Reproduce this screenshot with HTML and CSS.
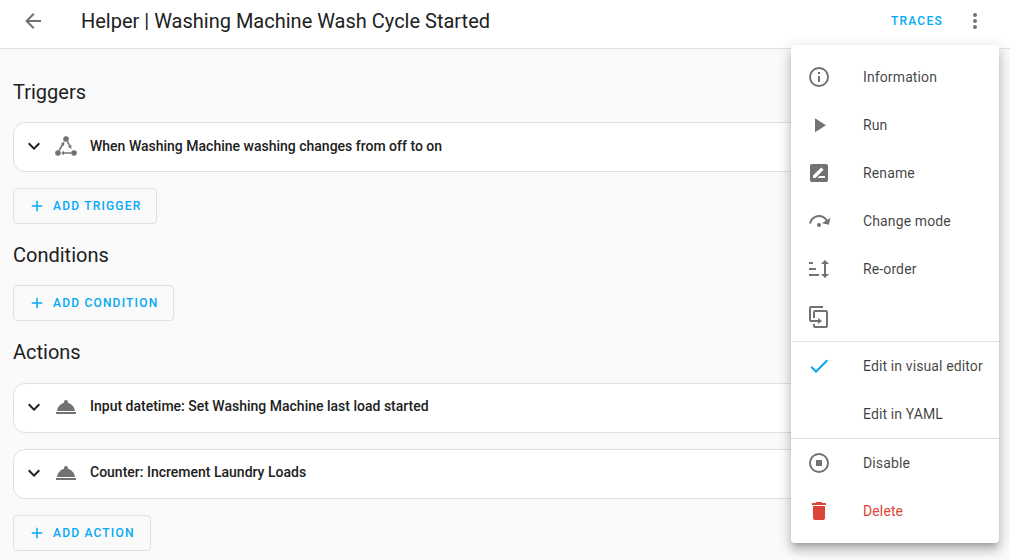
FILE: index.html
```html
<!DOCTYPE html>
<html lang="en">
<head>
  <meta charset="UTF-8" />
  <title>Helper | Washing Machine Wash Cycle Started</title>
  <link rel="stylesheet" href="styles.css">
</head>
<body>

  <header class="toolbar">
    <svg class="icon back-icon" viewBox="0 0 24 24"><path d="M20,11V13H8L13.5,18.5L12.08,19.92L4.16,12L12.08,4.08L13.5,5.5L8,11H20Z"/></svg>
    <div class="toolbar-title">Helper | Washing Machine Wash Cycle Started</div>
    <a class="traces" href="#">Traces</a>
    <svg class="icon dots-icon" viewBox="0 0 24 24"><path d="M12,16A2,2 0 0,1 14,18A2,2 0 0,1 12,20A2,2 0 0,1 10,18A2,2 0 0,1 12,16M12,10A2,2 0 0,1 14,12A2,2 0 0,1 12,14A2,2 0 0,1 10,12A2,2 0 0,1 12,10M12,4A2,2 0 0,1 14,6A2,2 0 0,1 12,8A2,2 0 0,1 10,6A2,2 0 0,1 12,4Z"/></svg>
  </header>

  <main class="content">
    <h2 class="section-title first">Triggers</h2>
    <div class="row-card">
      <svg class="chevron" viewBox="0 0 24 24"><path d="M7.41,8.58L12,13.17L16.59,8.58L18,10L12,16L6,10L7.41,8.58Z"/></svg>
      <svg class="icon" viewBox="0 0 24 24">
        <circle cx="12" cy="5" r="2.8"/><circle cx="4" cy="19" r="2.8"/><circle cx="20" cy="19" r="2.8"/>
        <path class="wire" d="M8.3,11.1L5,16.7M13.4,7.4L15.5,11.5M10,19H17"/>
        <path d="M10.3,7.6L10,12.1L6.6,10.1ZM17.5,15L13.8,12.5L17.2,10.5ZM7.2,19L10,16.8V21.2Z"/>
      </svg>
      <span class="row-label">When Washing Machine washing changes from off to on</span>
    </div>
    <button class="add-btn"><svg viewBox="0 0 24 24"><path d="M19,13H13V19H11V13H5V11H11V5H13V11H19V13Z"/></svg>Add trigger</button>

    <h2 class="section-title">Conditions</h2>
    <button class="add-btn"><svg viewBox="0 0 24 24"><path d="M19,13H13V19H11V13H5V11H11V5H13V11H19V13Z"/></svg>Add condition</button>

    <h2 class="section-title actions-title">Actions</h2>
    <div class="row-card action-row">
      <svg class="chevron" viewBox="0 0 24 24"><path d="M7.41,8.58L12,13.17L16.59,8.58L18,10L12,16L6,10L7.41,8.58Z"/></svg>
      <svg class="icon" viewBox="0 0 24 24"><path d="M2,17H22V19H2V17M13.84,7.79C13.94,7.55 14,7.28 14,7A2,2 0 0,0 12,5A2,2 0 0,0 10,7C10,7.28 10.06,7.55 10.16,7.79C6.25,8.91 3.34,12.3 3,16H21C20.66,12.3 17.75,8.91 13.84,7.79Z"/></svg>
      <span class="row-label">Input datetime: Set Washing Machine last load started</span>
    </div>
    <div class="row-card action-row">
      <svg class="chevron" viewBox="0 0 24 24"><path d="M7.41,8.58L12,13.17L16.59,8.58L18,10L12,16L6,10L7.41,8.58Z"/></svg>
      <svg class="icon" viewBox="0 0 24 24"><path d="M2,17H22V19H2V17M13.84,7.79C13.94,7.55 14,7.28 14,7A2,2 0 0,0 12,5A2,2 0 0,0 10,7C10,7.28 10.06,7.55 10.16,7.79C6.25,8.91 3.34,12.3 3,16H21C20.66,12.3 17.75,8.91 13.84,7.79Z"/></svg>
      <span class="row-label">Counter: Increment Laundry Loads</span>
    </div>
    <button class="add-btn"><svg viewBox="0 0 24 24"><path d="M19,13H13V19H11V13H5V11H11V5H13V11H19V13Z"/></svg>Add action</button>
  </main>

  <!-- Overflow menu -->
  <div class="menu">
    <div class="menu-item">
      <svg class="icon" viewBox="0 0 24 24"><path d="M11,9H13V7H11M12,20C7.59,20 4,16.41 4,12C4,7.59 7.59,4 12,4C16.41,4 20,7.59 20,12C20,16.41 16.41,20 12,20M12,2A10,10 0 0,0 2,12A10,10 0 0,0 12,22A10,10 0 0,0 22,12A10,10 0 0,0 12,2M11,17H13V11H11V17Z"/></svg>
      <span>Information</span>
    </div>
    <div class="menu-item">
      <svg class="icon" viewBox="0 0 24 24"><path d="M8,5.14V19.14L19,12.14L8,5.14Z"/></svg>
      <span>Run</span>
    </div>
    <div class="menu-item">
      <svg class="icon" viewBox="0 0 24 24"><path d="M18,17H10.5L12.5,15H18M6,17V14.5L13.88,6.65C14.07,6.45 14.39,6.45 14.59,6.65L16.35,8.41C16.55,8.61 16.55,8.92 16.35,9.12L8.47,17M19,3H5C3.89,3 3,3.89 3,5V19A2,2 0 0,0 5,21H19A2,2 0 0,0 21,19V5C21,3.89 20.1,3 19,3Z"/></svg>
      <span>Rename</span>
    </div>
    <div class="menu-item">
      <svg class="icon" viewBox="0 0 24 24"><path d="M12,14A2,2 0 0,1 14,16A2,2 0 0,1 12,18A2,2 0 0,1 10,16A2,2 0 0,1 12,14M23.46,8.86L21.87,15.75L15,14.16L18.8,11.78C17.39,9.5 14.87,8 12,8C8.05,8 4.77,10.86 4.12,14.63L2.15,14.28C2.96,9.58 7.06,6 12,6C15.58,6 18.73,7.89 20.5,10.72L23.46,8.86Z"/></svg>
      <span>Change mode</span>
    </div>
    <div class="menu-item">
      <svg class="icon" viewBox="0 0 24 24"><path d="M18,21L14,17H17V7H14L18,3L22,7H19V17H22M2,19V17H12V19M2,13V11H9V13M2,7V5H6V7H2Z"/></svg>
      <span>Re-order</span>
    </div>
    <div class="menu-item">
      <svg class="icon" viewBox="0 0 24 24"><path d="M11,17H4A2,2 0 0,1 2,15V3A2,2 0 0,1 4,1H16V3H4V15H11V13L15,16L11,19V17M19,21V7H8V13H6V7A2,2 0 0,1 8,5H19A2,2 0 0,1 21,7V21A2,2 0 0,1 19,23H8A2,2 0 0,1 6,21V19H8V21H19Z"/></svg>
      <span></span>
    </div>
    <div class="menu-divider"></div>
    <div class="menu-item">
      <svg class="icon check-icon" viewBox="0 0 24 24"><path d="M21,7L9,19L3.5,13.5L4.91,12.09L9,16.17L19.59,5.59L21,7Z"/></svg>
      <span>Edit in visual editor</span>
    </div>
    <div class="menu-item">
      <span class="no-icon">Edit in YAML</span>
    </div>
    <div class="menu-divider"></div>
    <div class="menu-item">
      <svg class="icon" viewBox="0 0 24 24"><path d="M12,2A10,10 0 0,0 2,12A10,10 0 0,0 12,22A10,10 0 0,0 22,12A10,10 0 0,0 12,2M12,4C16.41,4 20,7.59 20,12C20,16.41 16.41,20 12,20C7.59,20 4,16.41 4,12C4,7.59 7.59,4 12,4M9,9V15H15V9"/></svg>
      <span>Disable</span>
    </div>
    <div class="menu-item danger">
      <svg class="icon" viewBox="0 0 24 24"><path d="M19,4H15.5L14.5,3H9.5L8.5,4H5V6H19M6,19A2,2 0 0,0 8,21H16A2,2 0 0,0 18,19V7H6V19Z"/></svg>
      <span>Delete</span>
    </div>
  </div>

</body>
</html>
```

FILE: styles.css
```css
html, body {
  height: 100%;
}
body {
  margin: 0;
  overflow: hidden;
  position: relative;
  background: #fafafa;
  color: #212121;
  font-family: Roboto, "Liberation Sans", sans-serif;
}
.icon {
  width: 24px;
  height: 24px;
  flex: none;
  fill: #727272;
}
.wire {
  fill: none;
  stroke: #727272;
  stroke-width: 1.6;
}
.toolbar {
  display: flex;
  align-items: center;
  height: 48px;
  padding: 0 23px 0 21px;
  background: #fff;
  border-bottom: 1px solid #e0e0e0;
}
.back-icon {
  margin-right: 36px;
  margin-bottom: 6px;
}
.toolbar-title {
  flex: 1;
  font-size: 20px;
  line-height: 42px;
  padding-bottom: 6px;
}
.traces {
  margin-right: 20px;
  padding-bottom: 6px;
  color: #03a9f4;
  font-size: 12px;
  font-weight: 500;
  letter-spacing: 1.25px;
  text-decoration: none;
  text-transform: uppercase;
}
.dots-icon {
  margin-bottom: 6px;
}
.content {
  display: flex;
  flex-direction: column;
  align-items: flex-start;
  padding: 0 13px;
}
.section-title {
  margin: 19px 0 18px;
  font-size: 20px;
  font-weight: 400;
  line-height: 24px;
}
.section-title.first {
  margin-top: 31px;
}
.actions-title {
  margin-bottom: 19px;
}
.row-card {
  display: flex;
  align-items: center;
  box-sizing: border-box;
  width: 984px;
  height: 50px;
  margin-bottom: 16px;
  padding: 0 8px 2px;
  background: #fff;
  border: 1px solid #e0e0e0;
  border-radius: 12px;
}
.chevron {
  width: 24px;
  height: 24px;
  flex: none;
  fill: #212121;
  margin-right: 8px;
}
.row-label {
  margin-left: 12px;
  font-size: 14px;
  font-weight: 500;
}
.action-row .row-label {
  margin-bottom: 2px;
}
.add-btn {
  display: flex;
  align-items: center;
  height: 36px;
  padding: 0 15px 0 14px;
  background: transparent;
  border: 1px solid #e0e0e0;
  border-radius: 4px;
  color: #03a9f4;
  font-family: inherit;
  font-size: 12px;
  font-weight: 500;
  letter-spacing: 1.2px;
  text-transform: uppercase;
}
.add-btn svg {
  width: 18px;
  height: 18px;
  margin-right: 7px;
  fill: #03a9f4;
}
.menu {
  position: absolute;
  top: 45px;
  left: 791px;
  width: 208px;
  padding: 8px 0;
  background: #fff;
  border-radius: 4px;
  box-shadow: 0 5px 5px -3px rgba(0, 0, 0, 0.2), 0 8px 10px 1px rgba(0, 0, 0, 0.14), 0 3px 14px 2px rgba(0, 0, 0, 0.12);
}
.menu-item {
  display: flex;
  align-items: center;
  height: 48px;
  padding: 0 16px;
  color: rgba(0, 0, 0, 0.75);
  font-size: 14px;
  letter-spacing: 0.12px;
  white-space: nowrap;
}
.menu-item .icon {
  margin-right: 32px;
}
.no-icon {
  margin-left: 56px;
}
.check-icon {
  fill: #03a9f4;
}
.menu-divider {
  height: 1px;
  background: #e0e0e0;
}
.danger {
  color: #db4437;
}
.danger .icon {
  fill: #db4437;
}
```
